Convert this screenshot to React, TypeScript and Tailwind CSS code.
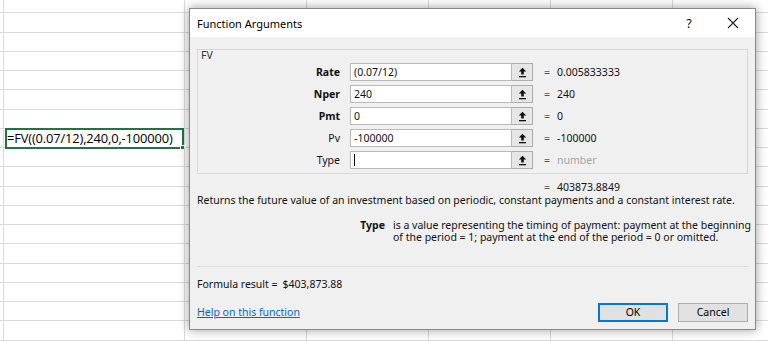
import React from "react";

const COLS = [4, 181, 122, 122, 122, 122, 122];
const ROWS = 19;

function UpArrow() {
  return (
    <svg width="9" height="11" viewBox="0 0 9 11" className="block">
      <path d="M4.5 0.8 L0.8 4.6 H3.2 V7.6 H5.8 V4.6 H8.2 Z" fill="#111" />
      <rect x="1" y="9" width="7" height="1.3" fill="#111" />
    </svg>
  );
}

function ArgRow({
  label,
  bold,
  value,
  result,
  muted,
  cursor,
}: {
  label: string;
  bold?: boolean;
  value: string;
  result: string;
  muted?: boolean;
  cursor?: boolean;
}) {
  return (
    <div className="flex items-center h-[18px] mb-[4px]">
      <div className={`w-[142px] shrink-0 text-right ${bold ? "font-bold" : ""}`}>{label}</div>
      <div className="ml-[10px] w-[162px] shrink-0 h-[18px] bg-white border border-[#b9b9b9] flex items-center pl-[3px]">
        {cursor ? <span className="w-px h-[12px] bg-black inline-block" /> : value}
      </div>
      <div className="w-[21px] shrink-0 h-[18px] bg-[#e6e6e6] border border-[#adadad] border-l-0 flex items-center justify-center">
        <UpArrow />
      </div>
      <div className="ml-[11px] text-[#555]">=</div>
      <div className={`ml-[7px] ${muted ? "text-[#a6a6a6]" : ""}`}>{result}</div>
    </div>
  );
}

export default function App() {
  return (
    <div className="relative w-[768px] h-[341px] overflow-hidden bg-white">
      {/* spreadsheet grid */}
      <div className="flex flex-col mt-[-6px]">
        {Array.from({ length: ROWS }).map((_, r) => (
          <div key={r} className="flex h-[19.25px] border-b border-[#dadada] shrink-0">
            {COLS.map((w, c) => (
              <div
                key={c}
                style={{ width: w }}
                className="relative shrink-0 border-r border-[#dadada] h-full"
              >
                {r === 7 && c === 1 && (
                  <>
                    <div className="absolute left-[1px] top-[-1px] w-[179px] h-[21px] border-2 border-[#217346]" />
                    <div className="absolute right-[-1px] bottom-[-3px] w-[5px] h-[5px] bg-[#217346] border border-white" />
                    <div className="absolute left-[3px] top-[0px] whitespace-nowrap text-[12.9px] leading-[18px] text-black font-['Open_Sans',sans-serif] tracking-[-0.15px]">
                      =FV((0.07/12),240,0,-100000)
                    </div>
                  </>
                )}
              </div>
            ))}
          </div>
        ))}
      </div>

      {/* dialog window */}
      <div className="absolute left-[189px] top-[8px] w-[567px] h-[322px] border border-[#8a8a8a] bg-[#f0f0f0] shadow-[0_0_10px_rgba(0,0,0,0.4)] flex flex-col font-['Noto_Sans',sans-serif] text-[10.5px] leading-[13px] text-[#111]">
        {/* title bar */}
        <div className="h-[28px] bg-white flex items-center pl-[7px] shrink-0">
          <div className="text-[11px] text-black">Function Arguments</div>
          <div className="ml-auto flex items-center">
            <div className="w-[44px] text-center text-[12px] text-black">?</div>
            <div className="w-[44px] flex justify-center">
              <svg width="12" height="12" viewBox="0 0 12 12">
                <path d="M1 1 L11 11 M11 1 L1 11" stroke="#222" strokeWidth="1.1" />
              </svg>
            </div>
          </div>
        </div>

        {/* body */}
        <div className="flex flex-col px-[7px]">
          {/* group box */}
          <div className="mt-[12px] h-[125px] border border-[#d9d9d9] flex flex-col">
            <div className="h-[13px] pl-[3px] leading-[11px] text-[#333]">FV</div>
            <ArgRow label="Rate" bold value="(0.07/12)" result="0.005833333" />
            <ArgRow label="Nper" bold value="240" result="240" />
            <ArgRow label="Pmt" bold value="0" result="0" />
            <ArgRow label="Pv" value="-100000" result="-100000" />
            <ArgRow label="Type" value="" result="number" muted cursor />
          </div>

          <div className="mt-[7px] h-[13px] flex pl-[347px]">
            <span className="text-[#555]">=</span>
            <span className="ml-[7px]">403873.8849</span>
          </div>
          <div className="h-[13px] whitespace-nowrap">
            Returns the future value of an investment based on periodic, constant payments and a constant interest rate.
          </div>

          <div className="mt-[12px] flex">
            <div className="w-[188px] shrink-0 text-right font-bold">Type</div>
            <div className="ml-[8px] flex flex-col whitespace-nowrap">
              <div className="h-[12px] leading-[12px]">is a value representing the timing of payment: payment at the beginning</div>
              <div className="h-[12px] leading-[12px]">of the period = 1; payment at the end of the period = 0 or omitted.</div>
            </div>
          </div>

          <div className="mt-[23px] border-t border-[#dcdcdc]" />

          <div className="mt-[11px] h-[13px] flex whitespace-nowrap">
            <span>Formula result =</span>
            <span className="ml-[5px]">$403,873.88</span>
          </div>

          <div className="mt-[12px] h-[19px] flex items-center">
            <span className="text-[#0066cc] underline">Help on this function</span>
            <div className="ml-auto flex gap-[10px]">
              <button className="w-[70px] h-[19px] bg-[#e1e1e1] border border-[#0078d7] outline outline-1 outline-[#0078d7] -outline-offset-2 text-[10.5px] text-black">
                OK
              </button>
              <button className="w-[70px] h-[19px] bg-[#e1e1e1] border border-[#adadad] text-[10.5px] text-black">
                Cancel
              </button>
            </div>
          </div>
        </div>
      </div>
    </div>
  );
}
